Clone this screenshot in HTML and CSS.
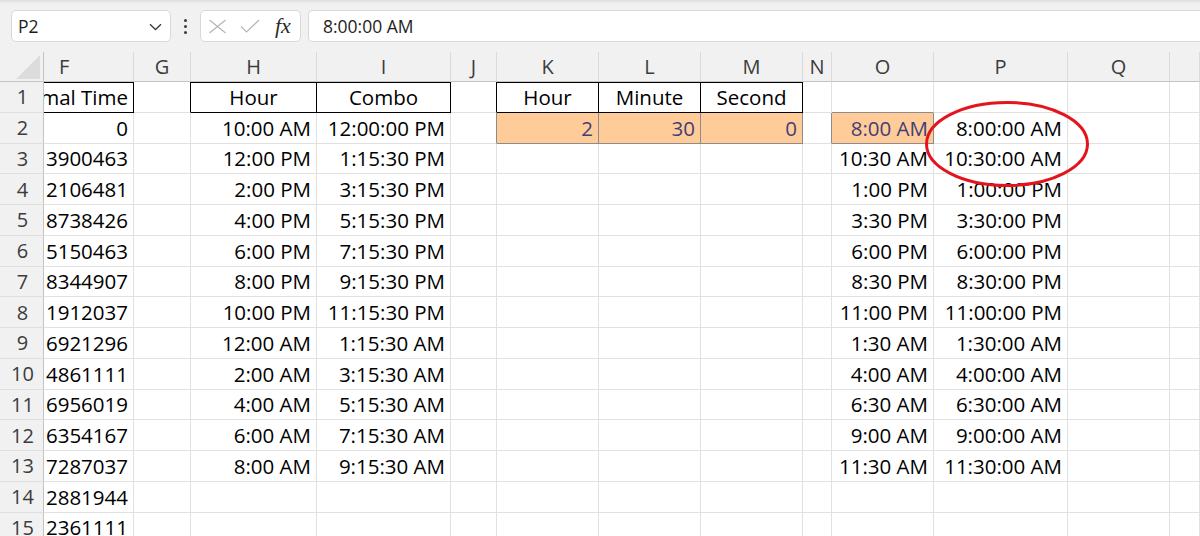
FILE: index.html
```html
<!DOCTYPE html>
<html>
<head>
<meta charset="utf-8">
<link rel="stylesheet" href="styles.css">
</head>
<body>
<div class="app">
  <div class="toolbar">
    <div class="namebox">
      <span class="nb-text">P2</span>
      <svg class="chev" width="13" height="8" viewBox="0 0 13 8"><path d="M1 1.2 L6.5 6.5 L12 1.2" fill="none" stroke="#3a3a3a" stroke-width="1.3"/></svg>
    </div>
    <div class="dots"><span></span><span></span><span></span></div>
    <div class="fxgroup">
      <svg width="19" height="15" viewBox="0 0 19 15"><path d="M1.5 1 L17.5 14 M17.5 1 L1.5 14" stroke="#b5b5b5" stroke-width="1.2" fill="none"/></svg>
      <svg width="20" height="14" viewBox="0 0 20 14"><path d="M1 7.5 L6.5 13 L19 1" stroke="#b5b5b5" stroke-width="1.2" fill="none"/></svg>
      <span class="fx">fx</span>
    </div>
    <div class="formula">8:00:00 AM</div>
  </div>

  <div class="sheet">
    <div class="row hdr">
      <div class="corner"><svg width="24" height="24" viewBox="0 0 24 24"><path d="M24 0 L24 24 L0 24 Z" fill="#dcdcdc"/></svg></div>
      <div class="ch chf">F</div><div class="ch">G</div><div class="ch">H</div><div class="ch">I</div><div class="ch">J</div><div class="ch">K</div><div class="ch">L</div><div class="ch">M</div><div class="ch">N</div><div class="ch">O</div><div class="ch">P</div><div class="ch">Q</div><div class="ch"></div>
    </div>

    <div class="row"><div class="rh">1</div><div class="c hb">mal Time</div><div class="c kr"></div><div class="c hb ctr">Hour</div><div class="c hb ctr">Combo</div><div class="c kr"></div><div class="c hb ctr">Hour</div><div class="c hb ctr">Minute</div><div class="c hb ctr">Second</div><div class="c"></div><div class="c gb"></div><div class="c"></div><div class="c"></div><div class="c"></div></div>

    <div class="row"><div class="rh">2</div><div class="c">0</div><div class="c"></div><div class="c">10:00 AM</div><div class="c">12:00:00 PM</div><div class="c gr"></div><div class="c inp">2</div><div class="c inp">30</div><div class="c inp">0</div><div class="c gr"></div><div class="c inp">8:00 AM</div><div class="c">8:00:00 AM</div><div class="c"></div><div class="c"></div></div>

    <div class="row"><div class="rh">3</div><div class="c">3900463</div><div class="c"></div><div class="c">12:00 PM</div><div class="c">1:15:30 PM</div><div class="c"></div><div class="c"></div><div class="c"></div><div class="c"></div><div class="c"></div><div class="c">10:30 AM</div><div class="c">10:30:00 AM</div><div class="c"></div><div class="c"></div></div>

    <div class="row"><div class="rh">4</div><div class="c">2106481</div><div class="c"></div><div class="c">2:00 PM</div><div class="c">3:15:30 PM</div><div class="c"></div><div class="c"></div><div class="c"></div><div class="c"></div><div class="c"></div><div class="c">1:00 PM</div><div class="c">1:00:00 PM</div><div class="c"></div><div class="c"></div></div>

    <div class="row"><div class="rh">5</div><div class="c">8738426</div><div class="c"></div><div class="c">4:00 PM</div><div class="c">5:15:30 PM</div><div class="c"></div><div class="c"></div><div class="c"></div><div class="c"></div><div class="c"></div><div class="c">3:30 PM</div><div class="c">3:30:00 PM</div><div class="c"></div><div class="c"></div></div>

    <div class="row"><div class="rh">6</div><div class="c">5150463</div><div class="c"></div><div class="c">6:00 PM</div><div class="c">7:15:30 PM</div><div class="c"></div><div class="c"></div><div class="c"></div><div class="c"></div><div class="c"></div><div class="c">6:00 PM</div><div class="c">6:00:00 PM</div><div class="c"></div><div class="c"></div></div>

    <div class="row"><div class="rh">7</div><div class="c">8344907</div><div class="c"></div><div class="c">8:00 PM</div><div class="c">9:15:30 PM</div><div class="c"></div><div class="c"></div><div class="c"></div><div class="c"></div><div class="c"></div><div class="c">8:30 PM</div><div class="c">8:30:00 PM</div><div class="c"></div><div class="c"></div></div>

    <div class="row"><div class="rh">8</div><div class="c">1912037</div><div class="c"></div><div class="c">10:00 PM</div><div class="c">11:15:30 PM</div><div class="c"></div><div class="c"></div><div class="c"></div><div class="c"></div><div class="c"></div><div class="c">11:00 PM</div><div class="c">11:00:00 PM</div><div class="c"></div><div class="c"></div></div>

    <div class="row"><div class="rh">9</div><div class="c">6921296</div><div class="c"></div><div class="c">12:00 AM</div><div class="c">1:15:30 AM</div><div class="c"></div><div class="c"></div><div class="c"></div><div class="c"></div><div class="c"></div><div class="c">1:30 AM</div><div class="c">1:30:00 AM</div><div class="c"></div><div class="c"></div></div>

    <div class="row"><div class="rh">10</div><div class="c">4861111</div><div class="c"></div><div class="c">2:00 AM</div><div class="c">3:15:30 AM</div><div class="c"></div><div class="c"></div><div class="c"></div><div class="c"></div><div class="c"></div><div class="c">4:00 AM</div><div class="c">4:00:00 AM</div><div class="c"></div><div class="c"></div></div>

    <div class="row"><div class="rh">11</div><div class="c">6956019</div><div class="c"></div><div class="c">4:00 AM</div><div class="c">5:15:30 AM</div><div class="c"></div><div class="c"></div><div class="c"></div><div class="c"></div><div class="c"></div><div class="c">6:30 AM</div><div class="c">6:30:00 AM</div><div class="c"></div><div class="c"></div></div>

    <div class="row"><div class="rh">12</div><div class="c">6354167</div><div class="c"></div><div class="c">6:00 AM</div><div class="c">7:15:30 AM</div><div class="c"></div><div class="c"></div><div class="c"></div><div class="c"></div><div class="c"></div><div class="c">9:00 AM</div><div class="c">9:00:00 AM</div><div class="c"></div><div class="c"></div></div>

    <div class="row"><div class="rh">13</div><div class="c">7287037</div><div class="c"></div><div class="c">8:00 AM</div><div class="c">9:15:30 AM</div><div class="c"></div><div class="c"></div><div class="c"></div><div class="c"></div><div class="c"></div><div class="c">11:30 AM</div><div class="c">11:30:00 AM</div><div class="c"></div><div class="c"></div></div>

    <div class="row"><div class="rh">14</div><div class="c">2881944</div><div class="c"></div><div class="c"></div><div class="c"></div><div class="c"></div><div class="c"></div><div class="c"></div><div class="c"></div><div class="c"></div><div class="c"></div><div class="c"></div><div class="c"></div><div class="c"></div></div>

    <div class="row"><div class="rh">15</div><div class="c">2361111</div><div class="c"></div><div class="c"></div><div class="c"></div><div class="c"></div><div class="c"></div><div class="c"></div><div class="c"></div><div class="c"></div><div class="c"></div><div class="c"></div><div class="c"></div><div class="c"></div></div>

    <svg class="circle" width="170" height="90" viewBox="0 0 170 90"><ellipse cx="84" cy="45" rx="80.5" ry="41.5" fill="none" stroke="#e3141e" stroke-width="3"/></svg>
  </div>
</div>
</body>
</html>
```

FILE: styles.css
```css
html, body {
  margin: 0;
  padding: 0;
  background: #ffffff;
}

.app {
  width: 1200px;
  height: 536px;
  overflow: hidden;
  font-family: "Open Sans", "Liberation Sans", sans-serif;
}

.toolbar {
  height: 52px;
  box-sizing: border-box;
  padding: 10px 0 0 11px;
  display: flex;
  align-items: flex-start;
  background: linear-gradient(#dedede 0px, #f1f1f1 4px, #f1f1f1 100%);
}

.namebox {
  width: 160px;
  height: 32px;
  box-sizing: border-box;
  background: #ffffff;
  border: 1px solid #d9d9d9;
  border-radius: 5px;
  display: flex;
  align-items: center;
  justify-content: space-between;
  padding: 0 8px 0 6px;
  font-size: 17.5px;
  color: #1e1e1e;
}

.chev {
  margin-top: 2px;
}

.dots {
  width: 29px;
  height: 32px;
  display: flex;
  flex-direction: column;
  align-items: center;
  justify-content: center;
  gap: 3px;
}

.dots span {
  width: 3px;
  height: 3px;
  border-radius: 50%;
  background: #3a3a3a;
}

.fxgroup {
  width: 101px;
  height: 32px;
  box-sizing: border-box;
  background: #ffffff;
  border: 1px solid #d9d9d9;
  border-radius: 5px;
  display: flex;
  align-items: center;
  padding: 0 6px 0 7px;
  gap: 13px;
}

.fx {
  font-family: "Liberation Serif", "DejaVu Serif", serif;
  font-style: italic;
  font-size: 22px;
  color: #2b2b2b;
  margin-left: 2px;
  line-height: 1;
}

.formula {
  flex: 1;
  margin-left: 7px;
  height: 32px;
  box-sizing: border-box;
  background: #ffffff;
  border: 1px solid #d9d9d9;
  border-right: none;
  border-radius: 5px 0 0 5px;
  padding-left: 14px;
  display: flex;
  align-items: center;
  font-size: 17.5px;
  color: #1e1e1e;
}

.sheet {
  position: relative;
  font-size: 20.5px;
  color: #000000;
}

.row {
  display: grid;
  grid-template-columns: 44px 90px 57px 126px 134px 46px 102px 102px 102px 29px 102px 134px 102px 1fr;
  height: 30.75px;
}

.row.hdr {
  height: 30px;
  background: #f1f1f1;
}

.corner {
  border-right: 1px solid #c4c4c4;
  border-bottom: 1px solid #c4c4c4;
  display: flex;
  align-items: flex-end;
  justify-content: flex-end;
  padding: 0 3px 2px 0;
}

.ch {
  border-right: 1px solid #dadada;
  border-bottom: 1px solid #c4c4c4;
  text-align: center;
  font-size: 20px;
  line-height: 30px;
  color: #3c3c3c;
  overflow: hidden;
}

.ch.chf {
  text-align: left;
  padding-left: 15px;
}

.rh {
  background: #f1f1f1;
  border-right: 1px solid #c4c4c4;
  border-bottom: 1px solid #dedede;
  text-align: center;
  font-size: 20px;
  color: #3c3c3c;
  display: flex;
  align-items: center;
  justify-content: center;
  padding-left: 2px;
}

.c {
  box-sizing: border-box;
  border-right: 1px solid #e1e1e1;
  border-bottom: 1px solid #e1e1e1;
  padding: 0 5px;
  display: flex;
  align-items: center;
  justify-content: flex-end;
  white-space: nowrap;
  overflow: hidden;
}

.c.ctr {
  justify-content: center;
}

.c.hb {
  border-top: 1px solid #000000;
  border-right: 1px solid #000000;
  border-bottom: 1px solid #000000;
}

.c.kr {
  border-right: 1px solid #000000;
}

.c.gr {
  border-right: 1px solid #8c8c8c;
}

.c.gb {
  border-bottom: 1px solid #8c8c8c;
}

.c.inp {
  background: #ffcc99;
  color: #3f3f76;
  border-right: 1px solid #8c8c8c;
  border-bottom: 1px solid #8c8c8c;
}

.circle {
  position: absolute;
  left: 923px;
  top: 47px;
}
```
